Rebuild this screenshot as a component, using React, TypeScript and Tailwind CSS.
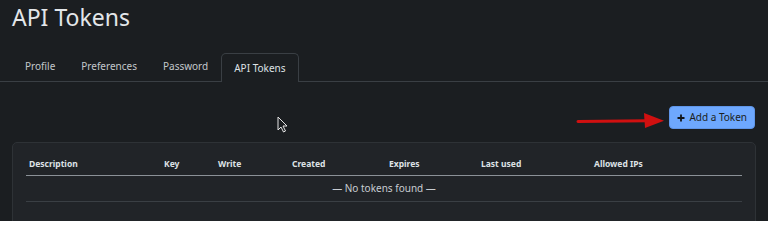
import React from "react";

const tabs = ["Profile", "Preferences", "Password", "API Tokens"];
const cols = [
  { label: "Description", w: "w-[135px]" },
  { label: "Key", w: "w-[54px]" },
  { label: "Write", w: "w-[74px]" },
  { label: "Created", w: "w-[97px]" },
  { label: "Expires", w: "w-[92px]" },
  { label: "Last used", w: "w-[113px]" },
  { label: "Allowed IPs", w: "flex-1" },
];

const Cursor = () => (
  <svg width="12" height="18" viewBox="0 0 12 18" className="absolute left-[277px] top-[116px]">
    <path d="M1 1 L1 14 L4 11 L6.5 16 L8.5 15 L6 10 L10 10 Z" fill="#1a1d20" stroke="#e5e5e5" strokeWidth="1" />
  </svg>
);

const Arrow = () => (
  <svg width="92" height="18" viewBox="0 0 92 18" className="absolute left-[576px] top-[112px]">
    <path d="M2 9.5 L72 8.7" stroke="#d01010" strokeWidth="3" strokeLinecap="round" />
    <path d="M68 1 L88 8.7 L69 16 Z" fill="#d01010" />
  </svg>
);

export default function App() {
  return (
    <div
      className="relative w-[768px] h-[221px] overflow-hidden bg-[#1b1e21] text-[#dee2e6]"
      style={{ fontFamily: '"Noto Sans", "Open Sans", sans-serif' }}
    >
      <h1 className="px-3 pt-[1px] text-[23px] leading-[32px] font-normal text-[#e3e6e9]">API Tokens</h1>

      <div className="mt-[20px] flex items-end border-b border-[#3a3f44] pl-[12px] h-[29px]">
        {tabs.map((t) => {
          const active = t === "API Tokens";
          return (
            <div
              key={t}
              className={
                active
                  ? "h-[29px] -mb-px px-[12px] flex items-center rounded-t-[5px] border border-b-0 border-[#3a3f44] bg-[#1b1e21] text-[10px] text-[#dee2e6]"
                  : "h-[29px] px-[13px] flex items-center text-[10px] text-[#c3c7cb]"
              }
            >
              {t}
            </div>
          );
        })}
      </div>

      <div className="flex justify-end pr-[13px] pt-[24px]">
        <button className="h-[23px] px-[7px] rounded-[4px] border border-[#5f95e8] bg-[#6ea8fe] text-[#1b1e21] text-[10px] flex items-center gap-[4px]">
          <svg width="8" height="8" viewBox="0 0 8 8">
            <path d="M4 0.5 V7.5 M0.5 4 H7.5" stroke="#111418" strokeWidth="1.8" />
          </svg>
          <span>Add a Token</span>
        </button>
      </div>

      <div className="mx-3 mt-[13px] rounded-[5px] border border-[#2e3236] bg-[#212428] px-[13px] pt-[15px] h-[120px]">
        <div className="flex border-b border-[#8b9197] pb-[4px] pl-[3px] text-[8.5px] font-bold text-[#dee2e6]">
          {cols.map((c) => (
            <div key={c.label} className={c.w}>
              {c.label}
            </div>
          ))}
        </div>
        <div className="h-[26px] flex items-center justify-center border-b border-[#3a3f44] text-[10px] text-[#c8cdd2]">
          — No tokens found —
        </div>
      </div>

      <Arrow />
      <Cursor />
    </div>
  );
}
